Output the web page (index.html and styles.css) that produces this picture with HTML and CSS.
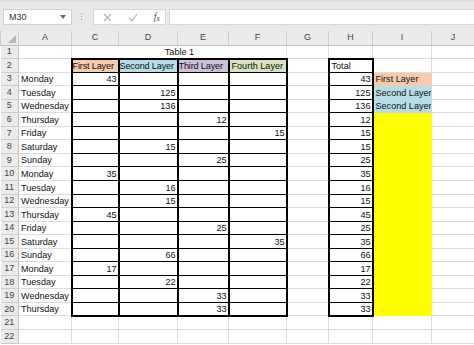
FILE: index.html
```html
<!DOCTYPE html>
<html lang="en">
<head>
  <meta charset="UTF-8" />
  <meta name="viewport" content="width=device-width, initial-scale=1.0"/>
  <title>Book1 - Excel</title>
  <link rel="stylesheet" href="styles.css">
</head>
<body>
  <div class="formula-bar">
    <div class="name-box">
      <span>M30</span>
      <svg class="caret" width="6" height="4" viewBox="0 0 6 4"><path d="M0 0h6L3 4z" fill="#666"/></svg>
    </div>
    <div class="grip"><i></i><i></i><i></i></div>
    <div class="fx-box">
      <svg width="9" height="9" viewBox="0 0 9 9"><path d="M1 1l7 7M8 1L1 8" stroke="#b0b0b0" stroke-width="1.1"/></svg>
      <svg width="10" height="9" viewBox="0 0 10 9"><path d="M1 5l3 3 5-7" stroke="#b0b0b0" stroke-width="1.1" fill="none"/></svg>
      <span class="fx">f<span class="fx-x">x</span></span>
    </div>
    <div class="formula-input"></div>
  </div>

  <table class="sheet">
    <colgroup>
      <col style="width:18px"><col style="width:53px"><col style="width:47px"><col style="width:59px">
      <col style="width:51px"><col style="width:58px"><col style="width:42px"><col style="width:44px">
      <col style="width:59px"><col style="width:43px">
    </colgroup>
    <thead>
      <tr>
        <th class="corner"><span class="tri"></span></th>
        <th>A</th><th>C</th><th>D</th><th>E</th><th>F</th><th>G</th><th>H</th><th>I</th><th>J</th>
      </tr>
    </thead>
    <tbody>
      <tr><th>1</th><td></td><td colspan="4" class="title">Table 1</td><td></td><td></td><td></td><td></td></tr>
      <tr><th>2</th><td></td>
        <td class="tb top l1">First Layer</td><td class="tb top l2">Second Layer</td><td class="tb top l3">Third Layer</td><td class="tb top l4">Fourth Layer</td>
        <td></td><td class="tb top">Total</td><td></td><td></td></tr>
      <tr><th>3</th><td>Monday</td><td class="tb n">43</td><td class="tb"></td><td class="tb"></td><td class="tb"></td><td></td><td class="tb n">43</td><td class="f1">First Layer</td><td></td></tr>
      <tr><th>4</th><td>Tuesday</td><td class="tb"></td><td class="tb n">125</td><td class="tb"></td><td class="tb"></td><td></td><td class="tb n">125</td><td class="f2">Second Layer</td><td></td></tr>
      <tr><th>5</th><td>Wednesday</td><td class="tb"></td><td class="tb n">136</td><td class="tb"></td><td class="tb"></td><td></td><td class="tb n">136</td><td class="f2">Second Layer</td><td></td></tr>
      <tr><th>6</th><td>Thursday</td><td class="tb"></td><td class="tb"></td><td class="tb n">12</td><td class="tb"></td><td></td><td class="tb n">12</td><td class="fy"></td><td></td></tr>
      <tr><th>7</th><td>Friday</td><td class="tb"></td><td class="tb"></td><td class="tb"></td><td class="tb n">15</td><td></td><td class="tb n">15</td><td class="fy"></td><td></td></tr>
      <tr><th>8</th><td>Saturday</td><td class="tb"></td><td class="tb n">15</td><td class="tb"></td><td class="tb"></td><td></td><td class="tb n">15</td><td class="fy"></td><td></td></tr>
      <tr><th>9</th><td>Sunday</td><td class="tb"></td><td class="tb"></td><td class="tb n">25</td><td class="tb"></td><td></td><td class="tb n">25</td><td class="fy"></td><td></td></tr>
      <tr><th>10</th><td>Monday</td><td class="tb n">35</td><td class="tb"></td><td class="tb"></td><td class="tb"></td><td></td><td class="tb n">35</td><td class="fy"></td><td></td></tr>
      <tr><th>11</th><td>Tuesday</td><td class="tb"></td><td class="tb n">16</td><td class="tb"></td><td class="tb"></td><td></td><td class="tb n">16</td><td class="fy"></td><td></td></tr>
      <tr><th>12</th><td>Wednesday</td><td class="tb"></td><td class="tb n">15</td><td class="tb"></td><td class="tb"></td><td></td><td class="tb n">15</td><td class="fy"></td><td></td></tr>
      <tr><th>13</th><td>Thursday</td><td class="tb n">45</td><td class="tb"></td><td class="tb"></td><td class="tb"></td><td></td><td class="tb n">45</td><td class="fy"></td><td></td></tr>
      <tr><th>14</th><td>Friday</td><td class="tb"></td><td class="tb"></td><td class="tb n">25</td><td class="tb"></td><td></td><td class="tb n">25</td><td class="fy"></td><td></td></tr>
      <tr><th>15</th><td>Saturday</td><td class="tb"></td><td class="tb"></td><td class="tb"></td><td class="tb n">35</td><td></td><td class="tb n">35</td><td class="fy"></td><td></td></tr>
      <tr><th>16</th><td>Sunday</td><td class="tb"></td><td class="tb n">66</td><td class="tb"></td><td class="tb"></td><td></td><td class="tb n">66</td><td class="fy"></td><td></td></tr>
      <tr><th>17</th><td>Monday</td><td class="tb n">17</td><td class="tb"></td><td class="tb"></td><td class="tb"></td><td></td><td class="tb n">17</td><td class="fy"></td><td></td></tr>
      <tr><th>18</th><td>Tuesday</td><td class="tb"></td><td class="tb n">22</td><td class="tb"></td><td class="tb"></td><td></td><td class="tb n">22</td><td class="fy"></td><td></td></tr>
      <tr><th>19</th><td>Wednesday</td><td class="tb"></td><td class="tb"></td><td class="tb n">33</td><td class="tb"></td><td></td><td class="tb n">33</td><td class="fy"></td><td></td></tr>
      <tr><th>20</th><td>Thursday</td><td class="tb bot"></td><td class="tb bot"></td><td class="tb bot n">33</td><td class="tb bot"></td><td></td><td class="tb bot n">33</td><td class="fy"></td><td></td></tr>
      <tr><th>21</th><td></td><td></td><td></td><td></td><td></td><td></td><td></td><td></td><td></td></tr>
      <tr><th>22</th><td></td><td></td><td></td><td></td><td></td><td></td><td></td><td></td><td></td></tr>
    </tbody>
  </table>
</body>
</html>
```

FILE: styles.css
```css
* {
  box-sizing: border-box;
}

body {
  margin: 0;
  width: 474px;
  height: 345px;
  overflow: hidden;
  background: #fff;
  color: #111;
  font-family: "Liberation Sans", Arial, sans-serif;
  font-size: 9.1px;
}

/* formula bar */
.formula-bar {
  display: flex;
  align-items: flex-start;
  height: 31px;
  padding: 7px 0 0 3px;
  background: #e9e9e9;
  border-top: 2px solid #dedede;
}

.name-box {
  display: flex;
  align-items: center;
  justify-content: space-between;
  width: 69px;
  height: 16px;
  padding: 0 5px 0 5px;
  background: #fff;
  border: 1px solid #d2d2d2;
  color: #333;
  font-size: 9px;
}

.grip {
  display: flex;
  flex-direction: column;
  gap: 2px;
  width: 21px;
  padding: 4px 0 0 9px;
}

.grip i {
  width: 1px;
  height: 1px;
  background: #9a9a9a;
}

.fx-box {
  display: flex;
  align-items: center;
  justify-content: space-between;
  width: 73px;
  height: 16px;
  padding: 0 5px 0 9px;
  background: #fff;
  border: 1px solid #d8d8d8;
}

.fx {
  font-family: "Liberation Serif", serif;
  font-style: italic;
  font-size: 10px;
  line-height: 10px;
  color: #555;
}

.fx-x {
  font-size: 8px;
  position: relative;
  top: 1px;
}

.formula-input {
  flex: 1;
  height: 16px;
  margin-left: 3px;
  background: #fff;
  border: 1px solid #d8d8d8;
  border-right: none;
}

/* grid */
.sheet {
  width: 474px;
  border-collapse: collapse;
  table-layout: fixed;
}

.sheet tr {
  height: 13.56px;
}

.sheet thead tr {
  height: 14px;
}

.sheet th {
  padding: 0;
  background: #ebebeb;
  border: 1px solid #cdcdcd;
  color: #444;
  font-weight: normal;
  font-size: 9px;
  line-height: 11px;
  text-align: center;
}

.sheet thead th {
  border-top: none;
  border-bottom-color: #bfbfbf;
}

.sheet tbody th {
  border-left: none;
  border-right-color: #c4c4c4;
}

.corner {
  position: relative;
}

.tri {
  position: absolute;
  right: 2px;
  bottom: 2px;
  width: 0;
  height: 0;
  border-left: 8px solid transparent;
  border-bottom: 8px solid #b9b9b9;
}

.sheet td {
  padding: 0 1px 0 2px;
  border: 1px solid #dcdcdc;
  line-height: 11px;
  vertical-align: bottom;
  white-space: nowrap;
  overflow: hidden;
}

.title {
  text-align: center;
}

.tb {
  border-top: 1px solid #000 !important;
  border-bottom: 1px solid #000 !important;
  border-left: 2px solid #000 !important;
  border-right: 2px solid #000 !important;
}

.tb.top {
  border-top-width: 2px !important;
}

.tb.bot {
  border-bottom-width: 2px !important;
}

.n {
  text-align: right;
}

.sheet .n {
  padding-right: 1px;
}

.l1 { background: #f8cbad; }
.l2 { background: #b7dee8; }
.l3 { background: #ccc0da; }
.l4 { background: #d8e4bc; }

.sheet .l1,
.sheet .l2,
.sheet .l3 {
  padding: 0;
  letter-spacing: -0.15px;
}

.sheet .f1 { background: #f8cbad; border-color: #f8cbad; }
.sheet .f2 { background: #b7dee8; border-color: #b7dee8; }
.sheet .fy { background: #ffff00; border-color: #ffff00; }
```
